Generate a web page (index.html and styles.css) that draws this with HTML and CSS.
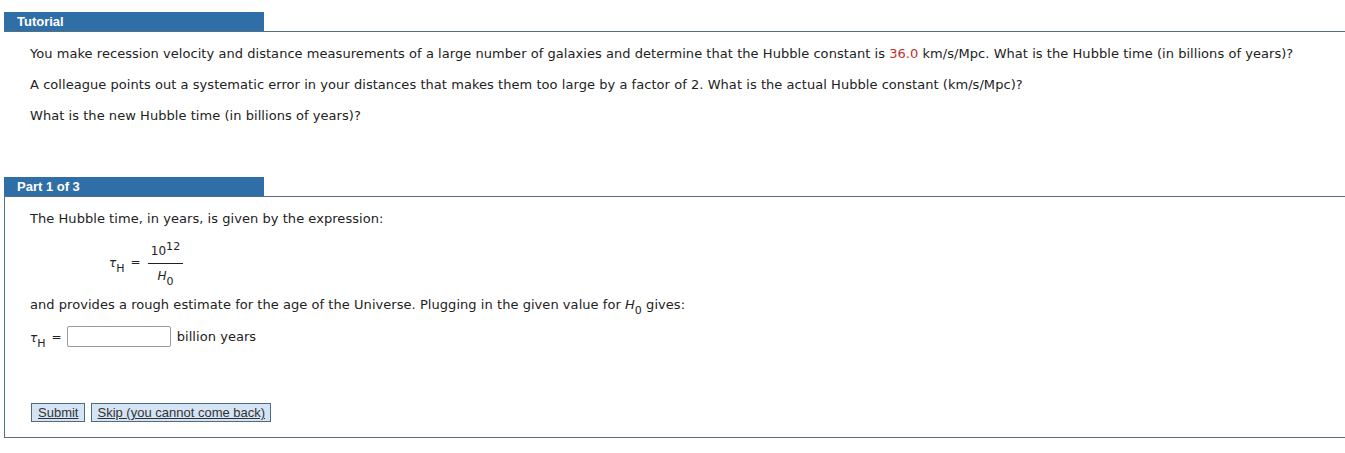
FILE: index.html
```html
<!DOCTYPE html>
<html>
<head>
<meta charset="utf-8">
<link rel="stylesheet" href="styles.css">
</head>
<body>
<div class="page">
  <section class="tutorial">
    <div class="sec-head"><div class="sec-title">Tutorial</div></div>
    <div class="tut-body">
      <p>You make recession velocity and distance measurements of a large number of galaxies and determine that the Hubble constant is <span class="red">36.0</span> km/s/Mpc. What is the Hubble time (in billions of years)?</p>
      <p>A colleague points out a systematic error in your distances that makes them too large by a factor of 2. What is the actual Hubble constant (km/s/Mpc)?</p>
      <p>What is the new Hubble time (in billions of years)?</p>
    </div>
  </section>
  <section class="part">
    <div class="sec-head"><div class="sec-title">Part 1 of 3</div></div>
    <div class="part-body">
      <p>The Hubble time, in years, is given by the expression:</p>
      <div class="formula">
        <span class="tau">τ<sub>H</sub></span>
        <span class="eq">=</span>
        <span class="frac">
          <span class="num">10<sup>12</sup></span>
          <span class="den"><i>H</i><sub>0</sub></span>
        </span>
      </div>
      <p class="after">and provides a rough estimate for the age of the Universe. Plugging in the given value for <i>H</i><sub>0</sub> gives:</p>
      <div class="answer">
        <span class="tau">τ<sub>H</sub></span>
        <span class="eq">=</span>
        <input type="text" class="ans-input">
        <span class="unit">billion years</span>
      </div>
      <div class="buttons">
        <button class="btn">Submit</button>
        <button class="btn btn-skip">Skip (you cannot come back)</button>
      </div>
    </div>
  </section>
</div>
</body>
</html>
```
FILE: styles.css
```css
html, body {
  margin: 0;
  padding: 0;
  background: #ffffff;
}
body {
  font-family: Verdana, "DejaVu Sans", sans-serif;
  font-size: 13px;
  letter-spacing: 0.05px;
  color: #222222;
}
.page {
  padding: 12px 0 0 4px;
}
.sec-head {
  display: flex;
  border-bottom: 1px solid #54707e;
}
.sec-title {
  width: 247px;
  height: 19px;
  line-height: 19px;
  padding-left: 13px;
  background: #2f6ea7;
  color: #ffffff;
  font-family: "Liberation Sans", Arial, sans-serif;
  font-weight: bold;
  font-size: 13px;
  letter-spacing: 0;
}
.tut-body {
  padding: 14px 0 0 26px;
  height: 131px;
}
.tut-body p {
  margin: 0 0 15px 0;
  line-height: 16px;
}
.red {
  color: #c42d2d;
}
.part {
  border-left: 1px solid #54707e;
  border-bottom: 1px solid #54707e;
}
.part .sec-head .sec-title {
  margin-left: -1px;
}
.part-body {
  padding: 14px 0 0 25px;
  height: 240px;
  box-sizing: border-box;
}
.part-body p {
  margin: 0;
  line-height: 16px;
}
.formula {
  display: flex;
  align-items: center;
  margin: 12px 0 0 79px;
  font-size: 12px;
}
.tau {
  font-style: italic;
  font-size: 12px;
  position: relative;
  top: 1px;
}
.tau sub {
  font-style: normal;
  font-size: 11px;
  vertical-align: -5px;
  line-height: 0;
}
.eq {
  margin: 0 7px 0 6px;
  font-size: 12px;
}
.frac {
  display: inline-flex;
  flex-direction: column;
  align-items: center;
}
.num {
  border-bottom: 1px solid #222;
  padding: 4px 3px 4px 3px;
  line-height: 16px;
  height: 16px;
}
.num sup {
  font-size: 11px;
  vertical-align: 5px;
  line-height: 0;
}
.den {
  padding-top: 4px;
  line-height: 16px;
  height: 16px;
}
.den i {
  font-size: 12px;
}
.den sub, .after sub {
  font-size: 11px;
  vertical-align: -5px;
  line-height: 0;
}
.after {
  margin-top: 13px !important;
}
.answer {
  display: flex;
  align-items: center;
  margin-top: 13px;
}
.answer .eq {
  margin: 0 5px 0 6px;
}
.ans-input {
  width: 104px;
  height: 21px;
  box-sizing: border-box;
  border: 1px solid #9a9a9a;
  border-radius: 2px;
  margin: 0 6px 0 0;
  padding: 0;
}
.buttons {
  display: flex;
  gap: 6px;
  margin-top: 56px;
  padding-left: 1px;
}
.btn {
  font-family: "Liberation Sans", Arial, sans-serif;
  font-size: 13px;
  letter-spacing: 0;
  text-decoration: underline;
  color: #333;
  background: #d4e4f4;
  border: 1px solid #4d6c84;
  padding: 1px 6px;
  height: 19px;
  line-height: 15px;
  border-radius: 0;
}
.btn-skip {
  padding: 1px 5px;
}
```
